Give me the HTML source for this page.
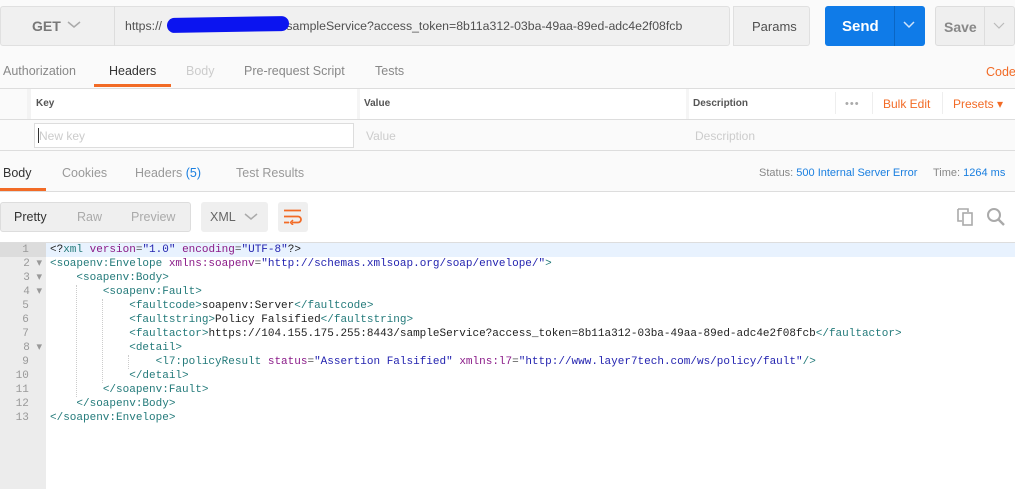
<!DOCTYPE html>
<html><head><meta charset="utf-8"><style>
*{box-sizing:border-box;margin:0;padding:0}
body{width:1015px;height:489px;overflow:hidden;background:#fafafa;font-family:"Liberation Sans",sans-serif;position:relative;color:#505050}
.a{position:absolute}
.code{font-family:"Liberation Mono",monospace;font-size:11px;line-height:14px;white-space:pre}
.t{color:#237a7a}.n{color:#8a1a88}.s{color:#2424b0}.x{color:#222}
</style></head><body>
<div class="a" style="left:0;top:6px;width:730px;height:40px;background:#f0f0f0;border:1px solid #e0e0e0;border-radius:3px"></div>
<div class="a" style="left:114px;top:6px;width:1px;height:40px;background:#ddd"></div>
<div class="a" style="left:32px;top:18px;font-size:14px;font-weight:bold;color:#777">GET</div>
<svg class="a" style="left:67px;top:20px" width="14" height="10"><path d="M1 2l6 5 6-5" stroke="#aaa" stroke-width="1.5" fill="none"/></svg>
<div class="a" style="left:125px;top:19px;font-size:12.3px;color:#505050">https://<span style="display:inline-block;width:121px"></span>/sampleService?access_token=8b11a312-03ba-49aa-89ed-adc4e2f08fcb</div>
<div class="a" style="left:167px;top:17px;width:122px;height:15px;background:#0b14f0;border-radius:8px;transform:rotate(-1deg)"></div>
<div class="a" style="left:733px;top:6px;width:77px;height:40px;border:1px solid #e0e0e0;border-radius:0 3px 3px 0;background:#f0f0f0"></div>
<div class="a" style="left:752px;top:19px;font-size:13px;color:#505050">Params</div>
<div class="a" style="left:825px;top:6px;width:100px;height:40px;background:#0f7be8;border-radius:3px"></div>
<div class="a" style="left:894px;top:6px;width:1px;height:40px;background:#0a66c4"></div>
<div class="a" style="left:842px;top:18px;font-size:15px;font-weight:bold;color:#fff">Send</div>
<svg class="a" style="left:902px;top:20px" width="14" height="10"><path d="M2 2l5 5 5-5" stroke="#cfe3fa" stroke-width="1.5" fill="none"/></svg>
<div class="a" style="left:935px;top:6px;width:80px;height:40px;background:#efefef;border:1px solid #ddd;border-radius:3px"></div>
<div class="a" style="left:984px;top:6px;width:1px;height:40px;background:#ddd"></div>
<div class="a" style="left:944px;top:19px;font-size:14px;font-weight:bold;color:#888">Save</div>
<svg class="a" style="left:993px;top:22px" width="12" height="8"><path d="M1 1l5 5 5-5" stroke="#bbb" stroke-width="1.2" fill="none"/></svg>
<div class="a" style="top:64px;left:3px;font-size:12.5px;color:#888">Authorization</div>
<div class="a" style="top:64px;left:109px;font-size:12.5px;color:#333">Headers</div>
<div class="a" style="top:84px;left:94px;width:77px;height:3px;background:#f26b26"></div>
<div class="a" style="top:64px;left:186px;font-size:12.5px;color:#ccc">Body</div>
<div class="a" style="top:64px;left:244px;font-size:12.5px;color:#888">Pre-request Script</div>
<div class="a" style="top:64px;left:375px;font-size:12.5px;color:#888">Tests</div>
<div class="a" style="top:65px;left:986px;font-size:12.5px;color:#f26b26">Code</div>
<div class="a" style="top:88px;left:0;width:1015px;height:1px;background:#ddd"></div>
<div class="a" style="top:89px;left:31px;width:984px;height:30px;background:#fff"></div>
<div class="a" style="top:89px;left:27px;width:4px;height:30px;background:#f3f3f3"></div>
<div class="a" style="top:89px;left:357px;width:3px;height:30px;background:#f5f5f5"></div>
<div class="a" style="top:89px;left:686px;width:3px;height:30px;background:#f5f5f5"></div>
<div class="a" style="top:98px;left:36px;font-size:10px;font-weight:bold;color:#555">Key</div>
<div class="a" style="top:98px;left:364px;font-size:10px;font-weight:bold;color:#555">Value</div>
<div class="a" style="top:98px;left:693px;font-size:10px;font-weight:bold;color:#555">Description</div>
<div class="a" style="top:92px;left:835px;width:1px;height:22px;background:#eee"></div>
<div class="a" style="top:98px;left:845px;font-size:11px;color:#aaa;letter-spacing:1px">•••</div>
<div class="a" style="top:92px;left:872px;width:1px;height:22px;background:#eee"></div>
<div class="a" style="top:97px;left:883px;font-size:12px;color:#f26b26">Bulk Edit</div>
<div class="a" style="top:92px;left:942px;width:1px;height:22px;background:#eee"></div>
<div class="a" style="top:97px;left:953px;font-size:12px;color:#f26b26">Presets ▾</div>
<div class="a" style="top:119px;left:0;width:1015px;height:1px;background:#ddd"></div>
<div class="a" style="top:123px;left:34px;width:320px;height:25px;background:#fff;border:1px solid #ddd"></div>
<div class="a" style="top:128px;left:38px;width:1px;height:15px;background:#333"></div>
<div class="a" style="top:129px;left:39px;font-size:12px;color:#ccc">New key</div>
<div class="a" style="top:129px;left:366px;font-size:12px;color:#ccc">Value</div>
<div class="a" style="top:129px;left:695px;font-size:12px;color:#ccc">Description</div>
<div class="a" style="top:150px;left:0;width:1015px;height:1px;background:#ddd"></div>
<div class="a" style="top:166px;left:3px;font-size:12.5px;color:#333">Body</div>
<div class="a" style="top:188px;left:0;width:46px;height:3px;background:#f26b26"></div>
<div class="a" style="top:166px;left:62px;font-size:12.5px;color:#999">Cookies</div>
<div class="a" style="top:166px;left:135px;font-size:12.5px;color:#999">Headers <span style="color:#1a7fe0">(5)</span></div>
<div class="a" style="top:166px;left:236px;font-size:12.5px;color:#999">Test Results</div>
<div class="a" style="top:167px;left:759px;font-size:11px;color:#888">Status: <span style="color:#1a7fe0">500 Internal Server Error</span></div>
<div class="a" style="top:167px;left:933px;font-size:11px;color:#888">Time: <span style="color:#1a7fe0">1264 ms</span></div>
<div class="a" style="top:191px;left:0;width:1015px;height:1px;background:#ddd"></div>
<div class="a" style="top:192px;left:0;width:1015px;height:50px;background:#fff"></div>
<div class="a" style="top:202px;left:0;width:191px;height:30px;background:#efefef;border:1px solid #ddd;border-radius:3px"></div>
<div class="a" style="top:210px;left:14px;font-size:12.5px;color:#333">Pretty</div>
<div class="a" style="top:210px;left:77px;font-size:12.5px;color:#aaa">Raw</div>
<div class="a" style="top:210px;left:131px;font-size:12.5px;color:#aaa">Preview</div>
<div class="a" style="top:202px;left:201px;width:67px;height:30px;background:#efefef;border-radius:3px"></div>
<div class="a" style="top:210px;left:210px;font-size:12.5px;color:#666">XML</div>
<svg class="a" style="left:244px;top:212px" width="14" height="10"><path d="M1 2l6 5 6-5" stroke="#aaa" stroke-width="1.5" fill="none"/></svg>
<div class="a" style="top:202px;left:278px;width:30px;height:30px;background:#efefef;border-radius:3px"></div>
<svg class="a" style="left:284px;top:209px" width="18" height="16"><path d="M0 1.5h17M0 7.5h14a3 3 0 0 1 0 6h-6M0 13.5h5" stroke="#f26b26" stroke-width="1.8" fill="none"/><path d="M9 11l-2.5 2.5 2.5 2.5" stroke="#f26b26" stroke-width="1.5" fill="none"/></svg>
<svg class="a" style="left:957px;top:208px" width="18" height="18"><path d="M1 1h10v3M1 1v12h4" stroke="#aaa" stroke-width="1.6" fill="none"/><rect x="6" y="5" width="9" height="12" stroke="#aaa" stroke-width="1.6" fill="none"/></svg>
<svg class="a" style="left:986px;top:207px" width="20" height="20"><circle cx="8" cy="8" r="6" stroke="#aaa" stroke-width="2" fill="none"/><path d="M12.5 12.5l5.5 5.5" stroke="#aaa" stroke-width="2.4"/></svg>
<div class="a" style="top:242px;left:0;width:1015px;height:247px;background:#fff;border-top:1px solid #ddd"></div>
<div class="a" style="top:243px;left:0;width:46px;height:246px;background:#ececec"></div>
<div class="a" style="top:243px;left:0;width:46px;height:14px;background:#dcdcdc"></div>
<div class="a" style="top:243px;left:46px;width:969px;height:14px;background:#e8f2fe"></div>
<div class="a code" style="top:243px;left:0;width:42px;text-align:right;color:#999">1  
2 ▾
3 ▾
4 ▾
5  
6  
7  
8 ▾
9  
10  
11  
12  
13  </div>
<div class="a" style="top:285px;left:76px;border-left:1px dotted #ccc;height:112px"></div>
<div class="a" style="top:299px;left:102px;border-left:1px dotted #ccc;height:84px"></div>
<div class="a" style="top:355px;left:128px;border-left:1px dotted #ccc;height:14px"></div>
<div class="a code" style="top:243px;left:50px"><span class="x">&lt;?</span><span class="t">xml</span> <span class="n">version</span>=<span class="s">"1.0"</span> <span class="n">encoding</span>=<span class="s">"UTF-8"</span><span class="x">?&gt;</span>
<span class="t">&lt;soapenv:Envelope</span> <span class="n">xmlns:soapenv</span>=<span class="s">"http://schemas.xmlsoap.org/soap/envelope/"</span><span class="t">&gt;</span>
    <span class="t">&lt;soapenv:Body&gt;</span>
        <span class="t">&lt;soapenv:Fault&gt;</span>
            <span class="t">&lt;faultcode&gt;</span><span class="x">soapenv:Server</span><span class="t">&lt;/faultcode&gt;</span>
            <span class="t">&lt;faultstring&gt;</span><span class="x">Policy Falsified</span><span class="t">&lt;/faultstring&gt;</span>
            <span class="t">&lt;faultactor&gt;</span><span class="x">https://104.155.175.255:8443/sampleService?access_token=8b11a312-03ba-49aa-89ed-adc4e2f08fcb</span><span class="t">&lt;/faultactor&gt;</span>
            <span class="t">&lt;detail&gt;</span>
                <span class="t">&lt;l7:policyResult</span> <span class="n">status</span>=<span class="s">"Assertion Falsified"</span> <span class="n">xmlns:l7</span>=<span class="s">"http://www.layer7tech.com/ws/policy/fault"</span><span class="t">/&gt;</span>
            <span class="t">&lt;/detail&gt;</span>
        <span class="t">&lt;/soapenv:Fault&gt;</span>
    <span class="t">&lt;/soapenv:Body&gt;</span>
<span class="t">&lt;/soapenv:Envelope&gt;</span></div>
</body></html>
